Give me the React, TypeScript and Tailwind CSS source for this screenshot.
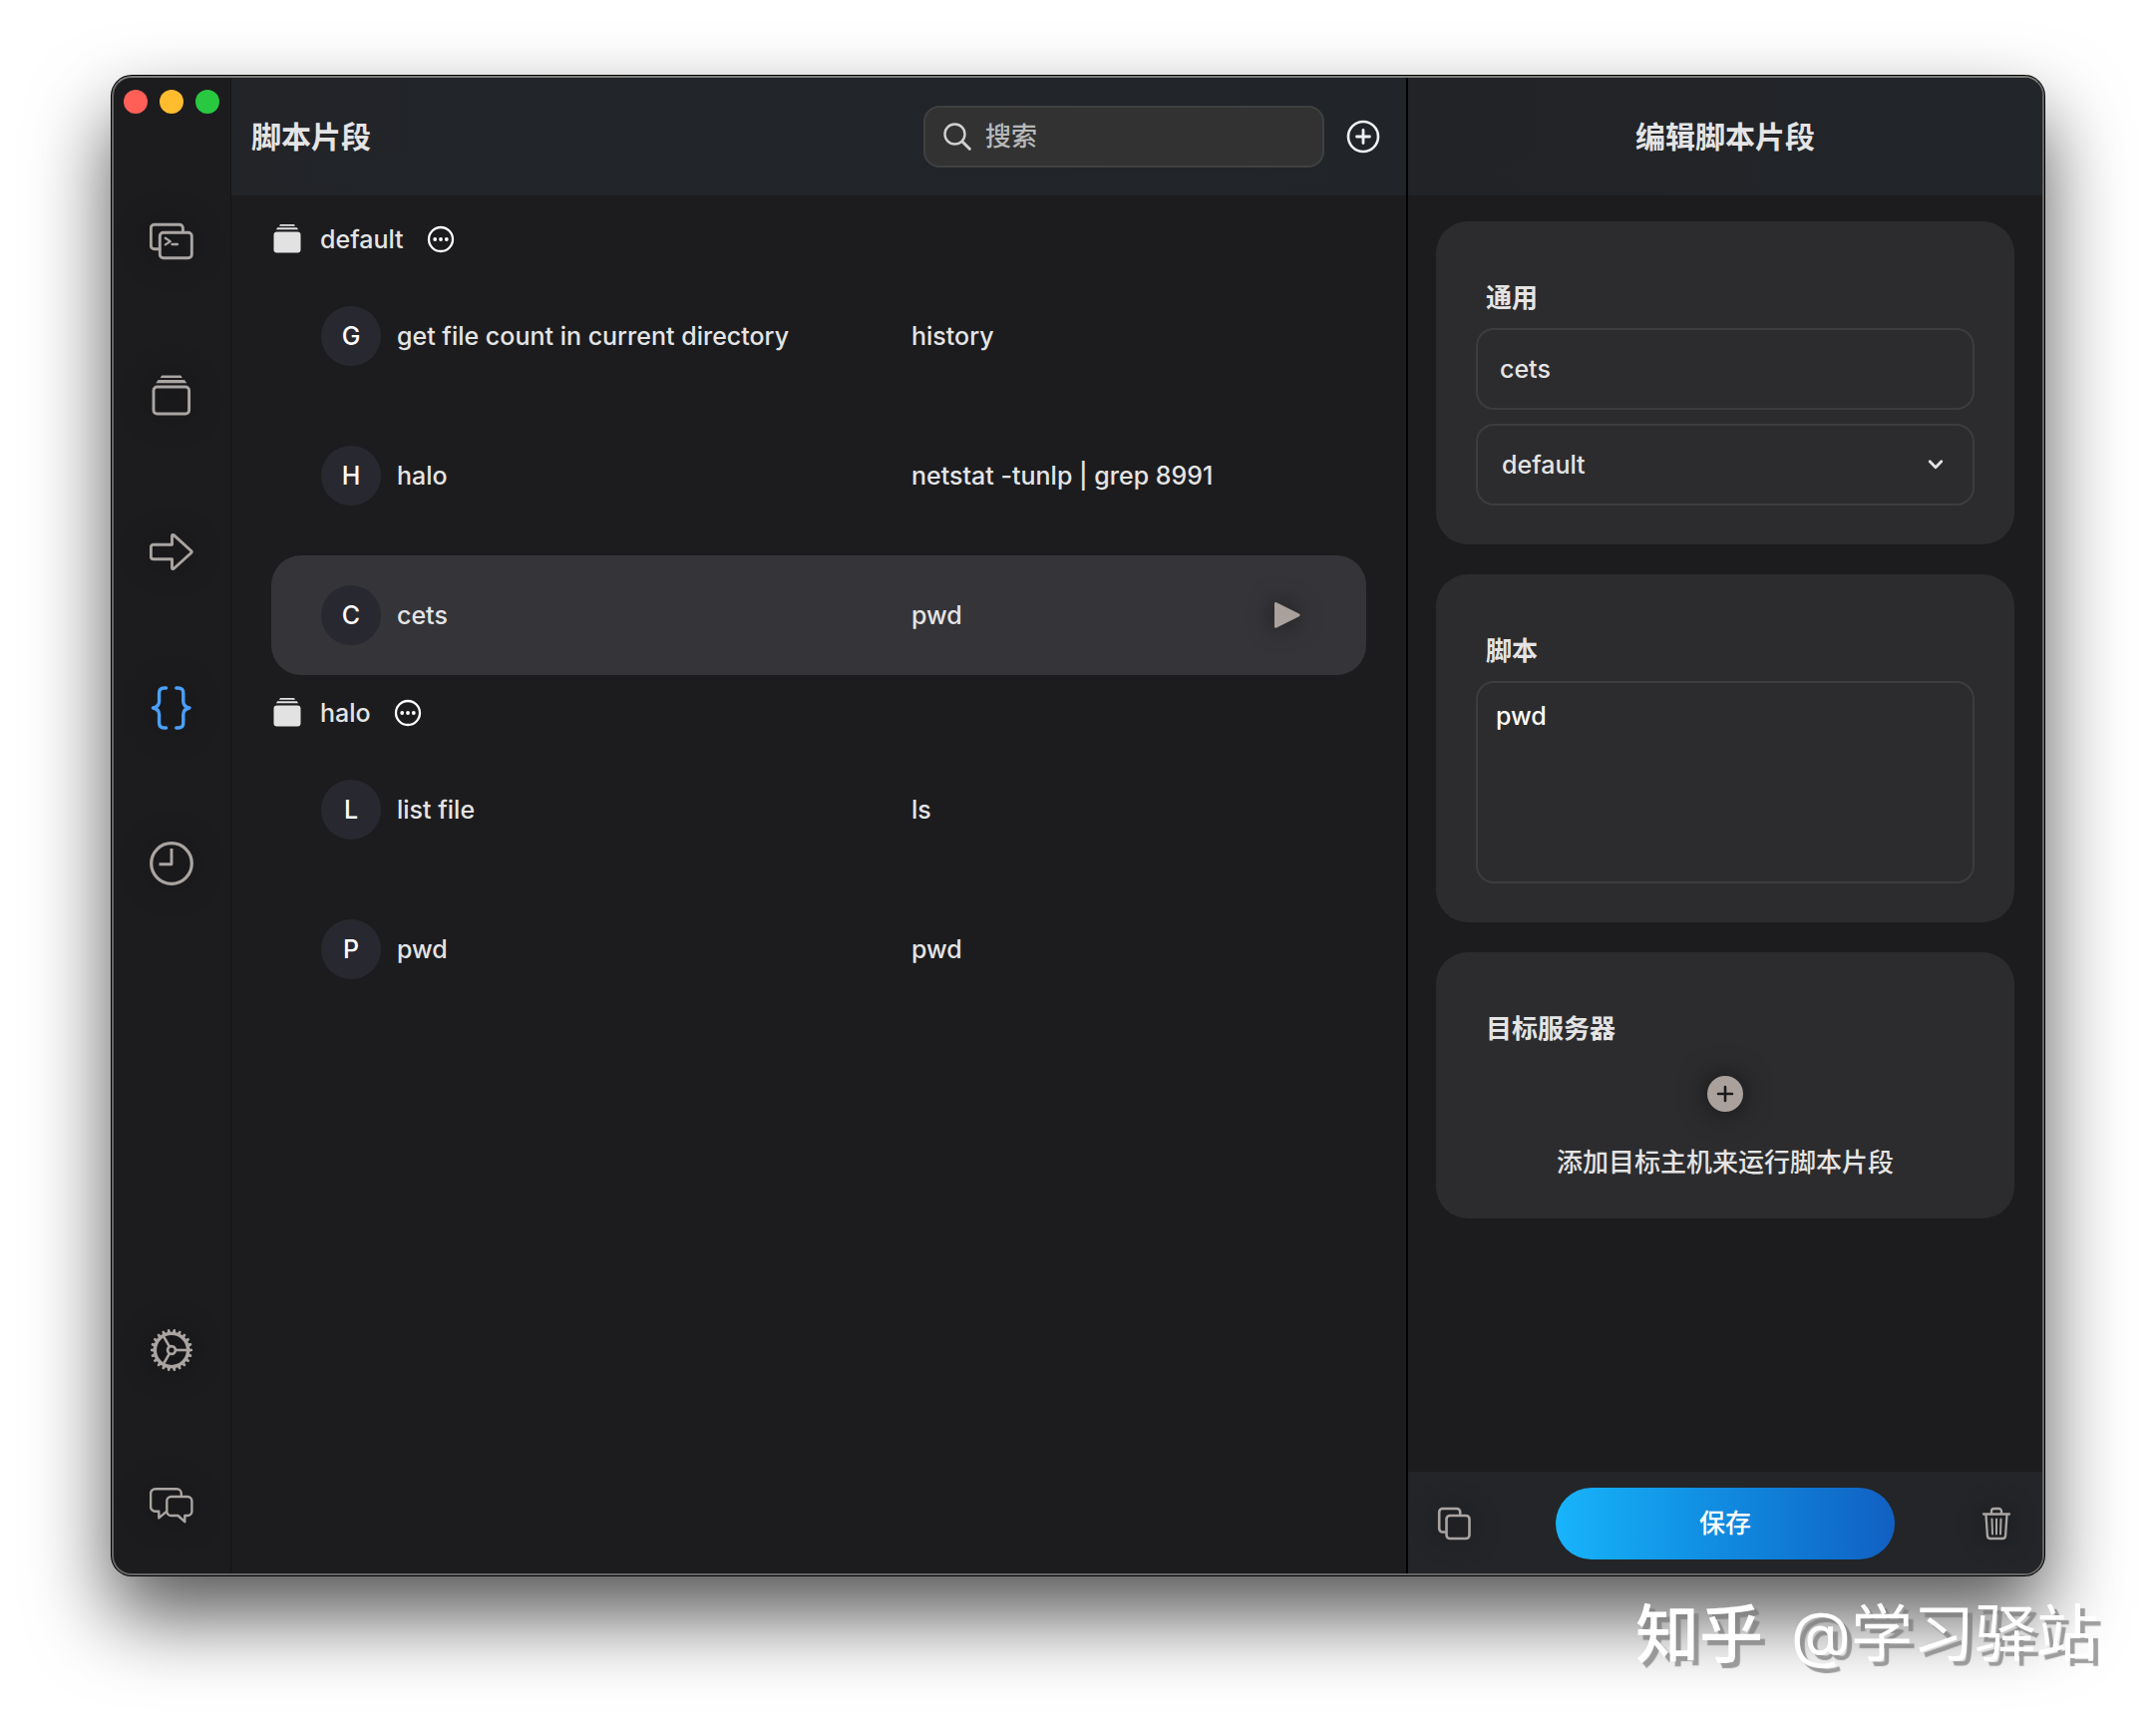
import type { ReactNode } from "react";

type IconProps = { className?: string };

function TerminalIcon({ className }: IconProps) {
  return (
    <svg viewBox="0 0 44 44" className={className} fill="none" stroke="currentColor" strokeWidth="2.9" strokeLinecap="round" strokeLinejoin="round">
      <path d="M33.4 13V8.8a3.5 3.5 0 0 0-3.5-3.5H4.8a3.5 3.5 0 0 0-3.5 3.5v17.5a3.5 3.5 0 0 0 3.5 3.5H10" />
      <rect x="10.3" y="13.3" width="32" height="25.4" rx="3.5" />
      <path d="m15.8 18.8 5 3.3-5 3.3M22.5 25h5.5" strokeWidth="2.3" />
    </svg>
  );
}

function StackIcon({ className }: IconProps) {
  return (
    <svg viewBox="0 1.5 44 44" className={className} fill="none">
      <rect x="4" y="13.5" width="35.6" height="27" rx="3.5" stroke="currentColor" strokeWidth="2.9" />
      <path d="M12.3 1.9h19l1.7 2.7H10.6zM8.6 6.6H35l2.3 3.100H6.3z" fill="currentColor" />
    </svg>
  );
}

function ArrowIcon({ className }: IconProps) {
  return (
    <svg viewBox="0 1 44 44" className={className} fill="none" stroke="currentColor" strokeWidth="2.9" strokeLinejoin="round">
      <path d="M3.8 15.3h18.7V6.5c0-1.1 1-1.5 1.8-.8l17.4 15.8c.6.6.6 1.4 0 2L24.3 39.3c-.8.7-1.8.3-1.8-.8v-8.8H3.8a2.5 2.5 0 0 1-2.5-2.5v-9.4a2.5 2.5 0 0 1 2.5-2.5z" />
    </svg>
  );
}

function BracesIcon({ className }: IconProps) {
  return (
    <svg viewBox="0 0 44 44" className={className} fill="none" stroke="currentColor" strokeWidth="3.4" strokeLinecap="round" strokeLinejoin="round">
      <path d="M16.6 2h-1.8C11.3 2 9.6 3.6 9.6 7v8.5c0 3.5-2 5.6-6.2 6.500 4.200.9 6.200 3 6.200 6.500V37c0 3.400 1.700 5 5.200 5h1.800" />
      <path d="M26.800 2h1.800c3.500 0 5.200 1.600 5.200 5v8.500c0 3.500 2 5.600 6.200 6.500-4.200.9-6.200 3-6.200 6.500V37c0 3.400-1.700 5-5.200 5h-1.800" />
    </svg>
  );
}

function ClockIcon({ className }: IconProps) {
  return (
    <svg viewBox="0 0 44 44" className={className} fill="none" stroke="currentColor" strokeWidth="3.2">
      <circle cx="22" cy="22" r="20.3" />
      <path d="M22 7v15.8H9.5" strokeWidth="2.9" strokeLinejoin="round" />
    </svg>
  );
}

const TEETH = Array.from({ length: 22 }, (_, i) => (i * 360) / 22);

function GearIcon({ className }: IconProps) {
  return (
    <svg viewBox="0 0 44 44" className={className} fill="none" stroke="currentColor">
      <circle cx="22" cy="22" r="16.6" strokeWidth="3.4" />
      <circle cx="22" cy="22" r="3.9" strokeWidth="2.7" />
      {[0, 120, 240].map((a) => (
        <path key={a} d="M26 22h11.5" strokeWidth="2.6" transform={`rotate(${a} 22 22)`} />
      ))}
      {TEETH.map((a) => (
        <path key={a} d="M39 20l4 1v2l-4 1z" fill="currentColor" stroke="none" transform={`rotate(${a} 22 22)`} />
      ))}
    </svg>
  );
}

function ChatIcon({ className }: IconProps) {
  return (
    <svg viewBox="0 0 44 44" className={className} fill="none" stroke="currentColor" strokeWidth="2.4" strokeLinecap="round" strokeLinejoin="round">
      <path d="M31.800 12V9.800a4.600 4.600 0 0 0-4.600-4.600H5.700a4.600 4.600 0 0 0-4.600 4.600v13.400a4.600 4.600 0 0 0 4.600 4.600h3.600v6.600l7.400-6.200" />
      <path d="M21.500 13h16.700a4.200 4.200 0 0 1 4.200 4.200v10.600a4.200 4.200 0 0 1-4.200 4.200h-2.900v6.200L28.500 32h-7a4.200 4.200 0 0 1-4.200-4.200V17.200a4.200 4.200 0 0 1 4.200-4.200z" />
    </svg>
  );
}

function FolderIcon() {
  return (
    <svg viewBox="0 1 28 30" className="h-[30px] w-7 text-[#e2e2e2]" fill="currentColor">
      <rect x="0.5" y="8.5" width="27" height="21" rx="3.2" />
      <path d="M7 1.100h14l1 1.600H6zM4.200 4.300h19.600l1.300 2H2.900z" />
    </svg>
  );
}

function EllipsisIcon() {
  return (
    <svg viewBox="0 0 28 28" className="size-7" fill="none">
      <circle cx="14" cy="14" r="12" stroke="currentColor" strokeWidth="2.3" />
      <g fill="currentColor">
        <circle cx="8.200" cy="14" r="1.900" />
        <circle cx="14" cy="14" r="1.900" />
        <circle cx="19.800" cy="14" r="1.900" />
      </g>
    </svg>
  );
}

const NAV: { label: string; icon: ReactNode; active?: boolean }[] = [
  { label: "终端", icon: <TerminalIcon className="size-11" /> },
  { label: "主机", icon: <StackIcon className="size-11" /> },
  { label: "端口转发", icon: <ArrowIcon className="size-11" /> },
  { label: "脚本片段", icon: <BracesIcon className="size-11" />, active: true },
  { label: "历史", icon: <ClockIcon className="size-11" /> },
];

const NAV_BOTTOM = [
  { label: "设置", icon: <GearIcon className="size-11" /> },
  { label: "反馈", icon: <ChatIcon className="size-11" /> },
];

const GROUPS = [
  {
    name: "default",
    items: [
      { name: "get file count in current directory", command: "history" },
      { name: "halo", command: "netstat -tunlp | grep 8991" },
      { name: "cets", command: "pwd", selected: true },
    ],
  },
  {
    name: "halo",
    items: [
      { name: "list file", command: "ls" },
      { name: "pwd", command: "pwd" },
    ],
  },
];

function NavButton({ label, icon, active }: { label: string; icon: ReactNode; active?: boolean }) {
  return (
    <button
      type="button"
      aria-label={label}
      className={
        active
          ? "flex h-16 w-full items-center justify-center text-[#4b9ff8] drop-shadow-[0_0_14px_rgba(0,0,0,0.6)]"
          : "flex h-16 w-full items-center justify-center text-[#aaa5a2] drop-shadow-[0_0_14px_rgba(0,0,0,0.6)]"
      }
    >
      {icon}
    </button>
  );
}

function Sidebar() {
  return (
    <nav className="flex w-[118px] shrink-0 flex-col border-r border-[#141416] pt-3 pb-9">
      <div className="flex gap-3 pl-2.5">
        <span className="size-6 rounded-full bg-[#ff5f57]" />
        <span className="size-6 rounded-full bg-[#febc2e]" />
        <span className="size-6 rounded-full bg-[#28c840]" />
      </div>
      <div className="mt-24 flex flex-col gap-[92px] pr-0.5">
        {NAV.map((n) => (
          <NavButton key={n.label} {...n} />
        ))}
      </div>
      <div className="mt-auto flex flex-col gap-[92px] pr-0.5">
        {NAV_BOTTOM.map((n) => (
          <NavButton key={n.label} {...n} />
        ))}
      </div>
    </nav>
  );
}

function SnippetRow({ name, command, selected }: { name: string; command: string; selected?: boolean }) {
  return (
    <li
      className={
        selected
          ? "grid h-[120px] grid-cols-[1fr_456px] items-center rounded-[30px] bg-[#353438] pl-[50px]"
          : "grid h-[120px] grid-cols-[1fr_456px] items-center rounded-[30px] pl-[50px]"
      }
    >
      <div className="flex items-center gap-4">
        <span className="flex size-[60px] shrink-0 items-center justify-center rounded-full bg-[#282830] text-white">
          {name[0].toUpperCase()}
        </span>
        <span>{name}</span>
      </div>
      <div className="flex items-center justify-between pr-[60px]">
        <span>{command}</span>
        {selected && (
          <button type="button" aria-label="运行" className="text-[#aaa19d] drop-shadow-[0_0_12px_rgba(0,0,0,0.6)]">
            <svg viewBox="0 0 36 32" className="h-8 w-9" fill="currentColor">
              <path d="M4 4.500c0-1.300 1.100-1.800 2.200-1.300l22.500 11.200c1.300.7 1.300 2.100 0 2.800L6.200 28.600c-1.100.5-2.200 0-2.200-1.300z" />
            </svg>
          </button>
        )}
      </div>
    </li>
  );
}

function SnippetList() {
  return (
    <main className="flex min-w-0 flex-1 flex-col">
      <header className="flex h-[118px] items-center bg-linear-to-r from-[#222428] to-[#212529] pr-[26px] pl-5">
        <h1 className="flex-1 text-[30px] leading-10 font-bold">脚本片段</h1>
        <label className="flex h-[62px] w-[402px] items-center gap-3.5 rounded-2xl border-2 border-[#404040] bg-[#323232] pl-[18px] text-[#b8b8b8]">
          <svg viewBox="0 0 28 28" className="size-7 shrink-0 text-[#d0d0d0]" fill="none" stroke="currentColor" strokeLinecap="round">
            <circle cx="11.500" cy="11.500" r="10" strokeWidth="2.400" />
            <path d="m19 19 7.300 7.300" strokeWidth="3" />
          </svg>
          <input
            type="search"
            aria-label="搜索"
            placeholder="搜索"
            className="min-w-0 flex-1 bg-transparent text-[26px] outline-none placeholder:text-[#b8b8b8]"
          />
        </label>
        <button type="button" aria-label="新建脚本片段" className="ml-[22px] text-[#f2f2f5]">
          <svg viewBox="0 0 34 34" className="size-[34px]" fill="none" stroke="currentColor" strokeLinecap="round">
            <circle cx="17" cy="17" r="15" strokeWidth="2.600" />
            <path d="M17 10.500v13M10.500 17h13" strokeWidth="2.800" />
          </svg>
        </button>
      </header>
      <div className="px-10 pt-1.5">
        {GROUPS.map((g) => (
          <section key={g.name}>
            <div className="flex h-[75px] items-center pl-0.5">
              <FolderIcon />
              <h2 className="ml-[19px]">{g.name}</h2>
              <button type="button" aria-label={`${g.name} 更多操作`} className="ml-[23px] text-white">
                <EllipsisIcon />
              </button>
            </div>
            <ul className="flex flex-col gap-5">
              {g.items.map((s) => (
                <SnippetRow key={s.name} {...s} />
              ))}
            </ul>
          </section>
        ))}
      </div>
    </main>
  );
}

function Card({ children }: { children: ReactNode }) {
  return <section className="flex flex-col rounded-[32px] bg-[#2c2c2e] px-10 pt-[60px] pb-[39px]">{children}</section>;
}

function Editor() {
  return (
    <aside className="flex w-[638px] shrink-0 flex-col border-l-2 border-black">
      <header className="flex h-[118px] items-center justify-center bg-linear-to-r from-[#222327] to-[#222529]">
        <h2 className="text-[30px] leading-10 font-bold">编辑脚本片段</h2>
      </header>
      <form className="flex flex-1 flex-col" onSubmit={(e) => e.preventDefault()}>
        <div className="flex flex-1 flex-col gap-[30px] px-7 pt-[26px]">
          <Card>
            <label htmlFor="snippet-name" className="mb-[13px] pl-2.5 text-[26px] font-bold">
              通用
            </label>
            <input
              id="snippet-name"
              defaultValue="cets"
              className="h-[82px] rounded-[18px] border-2 border-[#3d3d40] bg-transparent px-[22px] outline-none"
            />
            <div className="relative mt-3.5">
              <select
                aria-label="分组"
                defaultValue="default"
                className="h-[82px] w-full appearance-none rounded-[18px] border-2 border-[#3d3d40] bg-transparent px-6 outline-none"
              >
                <option>default</option>
                <option>halo</option>
              </select>
              <svg viewBox="0 0 16 12" className="pointer-events-none absolute top-[35px] right-[31px] h-3 w-4" fill="none" stroke="currentColor" strokeWidth="2.800" strokeLinecap="round" strokeLinejoin="round">
                <path d="m2.200 2.800 5.800 6 5.800-6" />
              </svg>
            </div>
          </Card>
          <Card>
            <label htmlFor="snippet-script" className="mb-[13px] pl-2.5 text-[26px] font-bold">
              脚本
            </label>
            <textarea
              id="snippet-script"
              defaultValue="pwd"
              className="h-[203px] resize-none rounded-[18px] border-2 border-[#3d3d40] bg-transparent px-[18px] py-4 text-white outline-none"
            />
          </Card>
          <Card>
            <h3 className="pl-2.5 text-[26px] font-bold">目标服务器</h3>
            <button type="button" aria-label="添加目标主机" className="mt-[30px] self-center drop-shadow-[0_0_14px_rgba(0,0,0,0.6)]">
              <svg viewBox="0 0 36 36" className="size-9">
                <circle cx="18" cy="18" r="18" fill="#aaa19d" />
                <path d="M18 11v14M11 18h14" stroke="#1a1a1c" strokeWidth="2.600" strokeLinecap="round" />
              </svg>
            </button>
            <p className="mt-[34px] text-center text-[26px]">添加目标主机来运行脚本片段</p>
          </Card>
        </div>
        <footer className="flex h-[102px] items-center justify-between bg-[#232529] px-7 pt-0.5 text-[#aaa5a2]">
          <button type="button" aria-label="复制" className="drop-shadow-[0_0_12px_rgba(0,0,0,0.6)]">
            <svg viewBox="0 0 36 36" className="size-9" fill="none" stroke="currentColor" strokeWidth="2.600" strokeLinecap="round">
              <path d="M9.500 26.500H6.700a3.500 3.500 0 0 1-3.500-3.500V6.500A3.500 3.500 0 0 1 6.700 3h14a3.500 3.500 0 0 1 3.500 3.500V9" />
              <rect x="10.500" y="10" width="23" height="23" rx="3.500" />
            </svg>
          </button>
          <button type="submit" className="h-[72px] w-[340px] rounded-full bg-linear-to-r from-[#18b4fb] to-[#1160c2] text-[26px] text-white">
            保存
          </button>
          <button type="button" aria-label="删除" className="drop-shadow-[0_0_12px_rgba(0,0,0,0.6)]">
            <svg viewBox="-2 -1 36 36" className="size-9" fill="none" stroke="currentColor" strokeWidth="2.300" strokeLinecap="round" strokeLinejoin="round">
              <path d="M3 7.500h26M11 7V4.500A2.500 2.500 0 0 1 13.500 2h5A2.500 2.500 0 0 1 21 4.500V7M5.500 8l1.400 21.200A3 3 0 0 0 9.900 32h12.200a3 3 0 0 0 3-2.800L26.500 8" />
              <path d="m11.500 12.500.500 15M16 12.500v15M20.500 12.500l-.500 15" strokeWidth="2" />
            </svg>
          </button>
        </footer>
      </form>
    </aside>
  );
}

export default function App() {
  return (
    <div className="flex min-h-screen flex-col bg-white px-[111px] pt-[75px] font-['Inter','Noto_Sans_CJK_SC',sans-serif] text-[25px] leading-[34px] font-medium text-[#e4e4e5]">
      <div className="flex flex-1 flex-col rounded-[21px] bg-black p-px shadow-[0_40px_80px_rgba(0,0,0,0.66)]">
        <div className="flex flex-1 overflow-hidden rounded-[20px] border-2 border-[#666667] border-t-[#7c7c7a] bg-[#1c1c1e]">
          <Sidebar />
          <SnippetList />
          <Editor />
        </div>
      </div>
      <p className="relative -mr-[53px] flex h-[147px] items-start justify-end gap-7 pt-[22px] text-[62px] leading-[72px] font-normal text-white [text-shadow:5px_5px_1px_rgba(120,120,120,0.7)]">
        <span className="text-[64px] font-medium">知乎</span>
        <span>@学习驿站</span>
      </p>
    </div>
  );
}
